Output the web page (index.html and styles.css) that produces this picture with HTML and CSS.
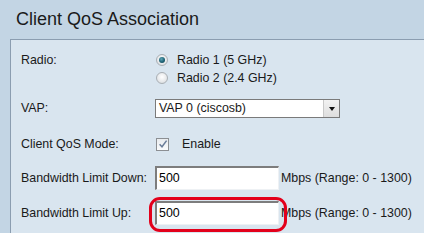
FILE: index.html
```html
<!DOCTYPE html>
<html>
<head>
<meta charset="utf-8">
<link rel="stylesheet" href="styles.css">
</head>
<body>
<div class="page">
  <h1 class="title">Client QoS Association</h1>
  <div class="panel">
    <div class="row row-radio1">
      <div class="label">Radio:</div>
      <div class="value">
        <span class="radio checked"></span><span class="opt">Radio 1 (5 GHz)</span>
      </div>
    </div>
    <div class="row row-radio2">
      <div class="label"></div>
      <div class="value">
        <span class="radio"></span><span class="opt">Radio 2 (2.4 GHz)</span>
      </div>
    </div>
    <div class="row row-vap">
      <div class="label">VAP:</div>
      <div class="value">
        <div class="select">
          <span class="select-text">VAP 0 (ciscosb)</span>
          <span class="select-btn"><span class="tri"></span></span>
        </div>
      </div>
    </div>
    <div class="row row-qos">
      <div class="label">Client QoS Mode:</div>
      <div class="value">
        <span class="checkbox">
          <svg width="10" height="10" viewBox="0 0 10 10"><path d="M1.6 5.2 L4 7.8 L8.6 1.6" fill="none" stroke="#6a7d99" stroke-width="1.5"/></svg>
        </span><span class="opt-check">Enable</span>
      </div>
    </div>
    <div class="row row-down">
      <div class="label">Bandwidth Limit Down:</div>
      <div class="value">
        <div class="input-wrap"><span class="input">500</span></div>
        <span class="unit">Mbps (Range: 0 - 1300)</span>
      </div>
    </div>
    <div class="row row-up">
      <div class="label">Bandwidth Limit Up:</div>
      <div class="value">
        <div class="input-wrap"><span class="input">500</span><span class="highlight"></span></div>
        <span class="unit">Mbps (Range: 0 - 1300)</span>
      </div>
    </div>
  </div>
</div>
</body>
</html>
```

FILE: styles.css
```css
html, body {
  margin: 0;
  padding: 0;
}
body {
  width: 424px;
  height: 233px;
  overflow: hidden;
  background: #c3d5e4;
  font-family: "Liberation Sans", Arial, sans-serif;
  color: #1a1a1a;
}
.page {
  width: 424px;
  height: 233px;
  overflow: hidden;
}
.title {
  margin: 0;
  padding: 9px 0 0 16px;
  height: 30px;
  font-size: 18px;
  font-weight: normal;
  color: #1a1a1a;
  line-height: normal;
}
.panel {
  margin-left: 10px;
  height: 182px;
  background: #d9e5ef;
  border-top: 1px solid #8b9db0;
  border-left: 1px solid #8b9db0;
  padding: 11px 0 0 10px;
  font-size: 12.4px;
}
.row {
  display: flex;
  align-items: center;
  position: relative;
}
.label {
  width: 134px;
  flex: none;
}
.value {
  display: flex;
  align-items: center;
}
.row-radio1, .row-radio2 { height: 18px; }
.row-vap { height: 18px; margin-top: 12px; }
.row-qos { height: 18px; margin-top: 18px; }
.row-down { height: 24px; margin-top: 13px; }
.row-up { height: 24px; margin-top: 11px; }

.radio {
  width: 10px;
  height: 10px;
  border-radius: 50%;
  border: 1px solid #a9afb4;
  background: radial-gradient(circle at 50% 40%, #ffffff 0%, #e6e8ea 60%, #cfd3d6 100%);
  margin-left: 1px;
  position: relative;
  flex: none;
}
.radio.checked::after {
  content: "";
  position: absolute;
  left: 2px;
  top: 2px;
  width: 6px;
  height: 6px;
  border-radius: 50%;
  background: radial-gradient(circle at 40% 35%, #5fa7b8 0%, #1d6275 55%, #0f3d4c 100%);
}
.opt {
  margin-left: 9px;
}
.select {
  width: 183px;
  height: 17px;
  border: 1px solid #7a7a7a;
  background: #fff;
  display: flex;
  align-items: center;
  justify-content: space-between;
}
.select-text {
  padding-left: 3px;
}
.select-btn {
  width: 15px;
  height: 17px;
  background: linear-gradient(#f2f2f2, #dedede);
  border-left: 1px solid #c9c9c9;
  display: flex;
  align-items: center;
  justify-content: center;
}
.tri {
  width: 0;
  height: 0;
  border-left: 3.5px solid transparent;
  border-right: 3.5px solid transparent;
  border-top: 4px solid #111;
  margin-top: 1px;
}
.checkbox {
  width: 11px;
  height: 11px;
  border: 1px solid #8c8f93;
  background: linear-gradient(#e9ecef, #fafbfc);
  margin-left: 1px;
  display: flex;
  align-items: center;
  justify-content: center;
  flex: none;
}
.opt-check {
  margin-left: 13px;
}
.input-wrap {
  position: relative;
}
.input {
  display: block;
  box-sizing: border-box;
  width: 124px;
  height: 24px;
  background: #fff;
  border-top: 2px solid #7d7d7d;
  border-left: 2px solid #7d7d7d;
  border-right: 1px solid #eef1f4;
  border-bottom: 1px solid #eef1f4;
  padding-left: 2px;
  line-height: 21px;
  color: #000;
}
.unit {
  margin-left: 2px;
}
.highlight {
  position: absolute;
  left: -6px;
  top: -4px;
  width: 132px;
  height: 29px;
  border: 3px solid #e3001b;
  border-radius: 11px;
}
```
